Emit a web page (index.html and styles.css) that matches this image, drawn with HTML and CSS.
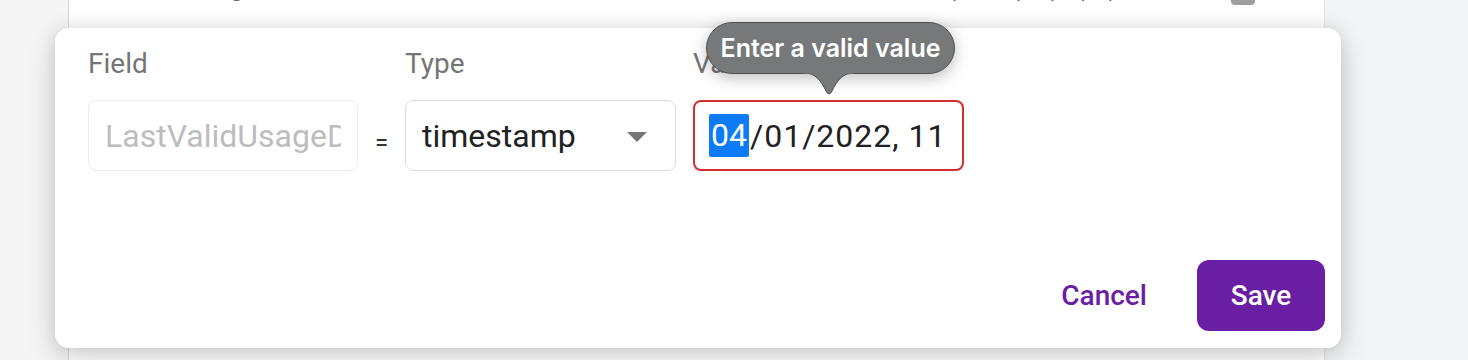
FILE: index.html
```html
<!DOCTYPE html>
<html lang="en">
<head>
<meta charset="utf-8">
<title>Edit condition</title>
<link rel="stylesheet" href="styles.css">
</head>
<body>
  <div class="page">
    <div class="sheet">
      <div class="sheet-row">
        <span class="bg-label">Setting</span>
        <span class="bg-meta">(1,2),(3),) [</span>
        <span class="bg-check"></span>
      </div>
    </div>
  </div>

  <div class="modal">
    <div class="fields">
      <div class="field">
        <label class="label">Field</label>
        <div class="input input-disabled"><span class="clip">LastValidUsageDate</span></div>
      </div>
      <div class="eq">=</div>
      <div class="field">
        <label class="label">Type</label>
        <div class="input input-select">
          <span>timestamp</span>
          <span class="caret"></span>
        </div>
      </div>
      <div class="field">
        <label class="label">Value</label>
        <div class="input input-error"><span class="sel">04</span><span class="date-rest">/01/2022, 11</span></div>
      </div>
    </div>

    <div class="actions">
      <button class="btn btn-text">Cancel</button>
      <button class="btn btn-primary">Save</button>
    </div>

    <div class="tooltip">
      Enter a valid value
      <svg class="tooltip-arrow" width="50" height="26" viewBox="0 0 50 26">
        <path d="M0 1 C12 1 17 9 22 19 Q25 25 28 19 C33 9 38 1 50 1 Z" fill="#77787a"/>
        <path d="M0 1 C12 1 17 9 22 19 Q25 25 28 19 C33 9 38 1 50 1" fill="none" stroke="#505050" stroke-width="1"/>
        <rect x="0" y="0" width="50" height="1.6" fill="#77787a"/>
      </svg>
    </div>
  </div>
</body>
</html>
```

FILE: styles.css
```css
html, body {
  margin: 0;
  padding: 0;
}

body {
  width: 1468px;
  height: 360px;
  overflow: hidden;
  background: #f3f4f6;
  font-family: Roboto, "Liberation Sans", Arial, sans-serif;
  position: relative;
}

.page {
  height: 360px;
  display: flex;
  padding-left: 68px;
  padding-right: 143px;
  background: linear-gradient(to right, #f5f5f5 0, #f5f5f5 68px, #f3f4f6 68px);
}

.sheet {
  flex: 1;
  background: #ffffff;
  border-left: 1px solid #d9d9d9;
  border-right: 1px solid #e4e4e4;
  overflow: hidden;
}

.sheet-row {
  display: flex;
  align-items: flex-start;
  height: 28px;
  margin-top: -28px;
  font-size: 28px;
  line-height: 28px;
  color: #666666;
}

.bg-label {
  margin-left: 88px;
}

.bg-meta {
  margin-left: auto;
  letter-spacing: 6px;
}

.bg-check {
  width: 24px;
  height: 24px;
  margin-top: 9px;
  margin-left: 80px;
  margin-right: 69px;
  border-radius: 4px;
  background: #9e9e9e;
}

.modal {
  position: absolute;
  left: 55px;
  top: 28px;
  width: 1286px;
  height: 320px;
  box-sizing: border-box;
  padding: 20px 16px 17px 33px;
  background: #ffffff;
  border-radius: 14px;
  box-shadow: 0 10px 30px rgba(0, 0, 0, 0.16), 0 0 18px rgba(0, 0, 0, 0.10);
  display: flex;
  flex-direction: column;
  justify-content: space-between;
}

.fields {
  display: flex;
  align-items: flex-end;
  gap: 17px;
}

.field {
  display: flex;
  flex-direction: column;
  gap: 20px;
  width: 271px;
}

.field:first-child {
  width: 270px;
}

.label {
  font-size: 28px;
  line-height: 32px;
  color: #757575;
}

.input {
  height: 71px;
  box-sizing: border-box;
  border: 1px solid #dcdcdc;
  border-radius: 8px;
  padding: 0 16px;
  display: flex;
  align-items: center;
  font-size: 32px;
  color: #212121;
  white-space: nowrap;
  overflow: hidden;
}

.input-disabled {
  border-color: #ebebeb;
  color: #bdbdbd;
}

.clip {
  display: block;
  width: 100%;
  overflow: hidden;
}

.input-select {
  justify-content: space-between;
}

.caret {
  width: 0;
  height: 0;
  border-left: 10px solid transparent;
  border-right: 10px solid transparent;
  border-top: 10px solid #757575;
  margin-right: 12px;
  margin-top: 2px;
}

.input-error {
  border: 2px solid #d32f2f;
  padding: 0 14px;
  letter-spacing: 1px;
}

.sel {
  background: #0c7bf5;
  color: #ffffff;
  padding: 2px 2px 3px 2px;
  letter-spacing: 0;
  border-radius: 2px;
}

.date-rest {
  padding-left: 1px;
}

.eq {
  width: 13px;
  height: 71px;
  display: flex;
  align-items: center;
  justify-content: center;
  padding-top: 14px;
  box-sizing: border-box;
  font-size: 24px;
  color: #333333;
}

.actions {
  display: flex;
  justify-content: flex-end;
  align-items: center;
  gap: 26px;
}

.btn {
  font-family: Roboto, "Liberation Sans", Arial, sans-serif;
  font-size: 28px;
  font-weight: 500;
  height: 71px;
  border: none;
  cursor: pointer;
}

.btn-text {
  background: transparent;
  color: #6a1ea4;
  padding: 0 24px;
}

.btn-primary {
  width: 128px;
  background: #6a1ea4;
  color: #ffffff;
  border-radius: 12px;
}

.tooltip {
  position: absolute;
  left: 651px;
  top: -6px;
  width: 249px;
  height: 52px;
  box-sizing: border-box;
  border: 1px solid #505050;
  border-radius: 26px;
  background: #77787a;
  color: #ffffff;
  font-family: Inter, "Open Sans", "Liberation Sans", sans-serif;
  font-size: 25px;
  font-weight: 600;
  display: flex;
  align-items: center;
  justify-content: center;
  box-shadow: 0 4px 16px rgba(0, 0, 0, 0.25);
}

.tooltip-arrow {
  position: absolute;
  left: 97px;
  top: 49px;
}
```
